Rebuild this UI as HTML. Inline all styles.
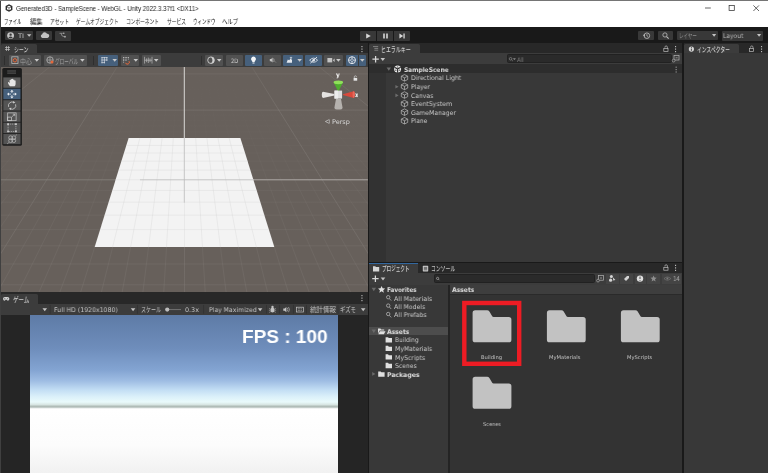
<!DOCTYPE html>
<html lang="ja"><head><meta charset="utf-8"><title>Generated3D - SampleScene - WebGL - Unity</title>
<style>
html,body{margin:0;padding:0;background:#191919;}
body{width:768px;height:473px;overflow:hidden;position:relative;font-family:"DejaVu Sans","Noto Sans CJK JP",sans-serif;}
.a{position:absolute;box-sizing:border-box;}
.t{will-change:transform;position:absolute;white-space:nowrap;line-height:2;transform-origin:0 50%;display:block;}
.b{position:absolute;background:#383838;border-radius:1px;}
.sb{position:absolute;background:#515151;border-radius:1px;top:55.2px;height:10.4px;}
.sb.on{background:#46607c;}
svg{position:absolute;overflow:visible;}
.tb{position:absolute;left:3.2px;width:17.3px;height:10.6px;background:#565656;border-radius:1px;}
</style></head>
<body>
<!-- ===== window chrome ===== -->
<div class="a" style="left:0;top:0;width:768px;height:26.7px;background:#fff"></div>
<div class="a" style="left:0;top:0;width:768px;height:1px;background:#757575"></div>
<!-- unity logo -->
<svg style="left:5.2px;top:3.9px" width="8" height="8" viewBox="0 0 16 16"><path d="M8 0.5 L14.8 4.2 V11.8 L8 15.5 L1.2 11.8 V4.2 Z" fill="#2b2b2b"/><path d="M8 3.4 L11.8 5.4 L8 7.4 L4.2 5.4 Z M4 6.6 L7.4 8.4 V12.4 L4 10.6 Z M12 6.6 L8.6 8.4 V12.4 L12 10.6 Z" fill="#fff"/></svg>
<!-- window buttons -->
<svg style="left:700px;top:2px" width="66" height="14" viewBox="0 0 66 14"><path d="M5 6 H10.8" stroke="#333" stroke-width=".75"/><rect x="29.1" y="3.4" width="5.2" height="5.2" fill="none" stroke="#333" stroke-width=".75"/><path d="M53.4 3.4 L59 9 M59 3.4 L53.4 9" stroke="#333" stroke-width=".75"/></svg>

<!-- ===== main toolbar ===== -->
<div class="a" style="left:0;top:26.7px;width:768px;height:17px;background:#191919"></div>
<div class="b" style="left:4.7px;top:30.5px;width:28.3px;height:9.8px"></div>
<div class="b" style="left:36.4px;top:30.5px;width:15.6px;height:9.8px"></div>
<div class="b" style="left:55.3px;top:30.5px;width:15.4px;height:10px"></div>
<svg style="left:7.4px;top:31.6px" width="7.2" height="7.2" viewBox="0 0 16 16"><circle cx="8" cy="8" r="7.6" fill="#c4c4c4"/><circle cx="8" cy="6" r="2.6" fill="#383838"/><path d="M3.2 12.6 Q8 7.4 12.8 12.6 Q8 16 3.2 12.6Z" fill="#383838"/></svg>
<svg style="left:27.2px;top:33.8px" width="4.4" height="3" viewBox="0 0 8 5"><path d="M0 0 H8 L4 5Z" fill="#c4c4c4"/></svg>
<svg style="left:39.6px;top:32.4px" width="9.6" height="6" viewBox="0 0 20 12"><path d="M5 12 A4 4 0 0 1 4.6 4.2 A5.2 5.2 0 0 1 14.6 3.6 A4.2 4.2 0 0 1 15.6 12 Z" fill="#c4c4c4"/></svg>
<svg style="left:59.4px;top:32.2px" width="7.6" height="6.4" viewBox="0 0 16 13"><path d="M1 2.5 H8 M4.5 2.5 Q5 9.5 10.5 9.5 H12" stroke="#b0b0b0" stroke-width="1.3" fill="none"/><circle cx="10" cy="2.5" r="1.7" fill="#b0b0b0"/><circle cx="12.6" cy="9.6" r="1.9" fill="#b0b0b0"/></svg>
<!-- play controls -->
<div class="b" style="left:359.7px;top:30.5px;width:16.2px;height:10px;border-radius:1px 0 0 1px"></div>
<div class="b" style="left:376.5px;top:30.5px;width:16.4px;height:10px;border-radius:0"></div>
<div class="b" style="left:393.5px;top:30.5px;width:16.2px;height:10px;border-radius:0 1px 1px 0"></div>
<svg style="left:359.7px;top:30.5px" width="50" height="10" viewBox="0 0 50 10"><path d="M6.2 2.4 L10.8 5 L6.2 7.6Z" fill="#d8d8d8"/><path d="M23.2 2.5 h1.6 v5 h-1.6z M26.2 2.5 h1.6 v5 h-1.6z" fill="#d8d8d8"/><path d="M39.4 2.5 L43.2 5 L39.4 7.5Z M43.4 2.5 h1.3 v5 h-1.3z" fill="#d8d8d8"/></svg>
<!-- right buttons -->
<div class="b" style="left:638.1px;top:30.5px;width:16.1px;height:9.8px"></div>
<div class="b" style="left:657.7px;top:30.5px;width:15.6px;height:9.8px"></div>
<div class="b" style="left:676.9px;top:30.5px;width:41.2px;height:9.8px"></div>
<div class="b" style="left:721.7px;top:30.5px;width:41.3px;height:10px"></div>
<svg style="left:642.6px;top:31.6px" width="7.4" height="7.4" viewBox="0 0 16 16"><circle cx="8.4" cy="8" r="6" fill="none" stroke="#c0c0c0" stroke-width="1.8"/><path d="M8.4 4.6 V8.4 L11 9.8" stroke="#c0c0c0" stroke-width="1.5" fill="none"/><path d="M0 6 L5 6 L2.4 9.6Z" fill="#c0c0c0"/></svg>
<svg style="left:661.6px;top:31.8px" width="7.4" height="7.4" viewBox="0 0 16 16"><circle cx="6.4" cy="6.4" r="4.6" fill="none" stroke="#c0c0c0" stroke-width="1.7"/><path d="M9.8 9.8 L14.4 14.4" stroke="#c0c0c0" stroke-width="2.2"/></svg>
<svg style="left:712.4px;top:33.9px" width="4.2" height="2.8" viewBox="0 0 8 5"><path d="M0 0 H8 L4 5Z" fill="#c4c4c4"/></svg>
<svg style="left:757.3px;top:33.9px" width="4.2" height="2.8" viewBox="0 0 8 5"><path d="M0 0 H8 L4 5Z" fill="#c4c4c4"/></svg>

<!-- ===== SCENE panel ===== -->
<div class="a" style="left:1px;top:43.3px;width:367px;height:10px;background:#282828"></div>
<div class="a" style="left:1px;top:43.5px;width:36.2px;height:9.9px;background:#3c3c3c;border-radius:1.5px 1.5px 0 0"></div>
<svg style="left:4.6px;top:46.2px" width="5" height="5" viewBox="0 0 10 10"><path d="M3 0 V10 M7 0 V10 M0 3 H10 M0 7 H10" stroke="#c4c4c4" stroke-width="1.3"/></svg>
<svg style="left:360.6px;top:45.6px" width="2" height="6.4" viewBox="0 0 2 6.4"><rect x=".4" y="0" width="1.1" height="1.2" fill="#bdbdbd"/><rect x=".4" y="2.5" width="1.1" height="1.2" fill="#bdbdbd"/><rect x=".4" y="5" width="1.1" height="1.2" fill="#bdbdbd"/></svg>
<div class="a" style="left:1px;top:53.3px;width:367px;height:14.1px;background:#3c3c3c"></div>
<!-- scene toolbar buttons -->
<div class="a" style="left:4px;top:56px;width:1px;height:8.6px;background:#2e2e2e"></div>
<div class="sb" style="left:9.3px;width:32.1px"></div>
<div class="sb" style="left:44px;width:43px"></div>
<div class="a" style="left:93.2px;top:56px;width:1px;height:8.6px;background:#2e2e2e"></div>
<div class="sb on" style="left:98.2px;width:12.7px;border-radius:1px 0 0 1px"></div>
<div class="sb on" style="left:111.3px;width:6.8px;border-radius:0 1px 1px 0"></div>
<div class="sb" style="left:120.5px;width:11.4px;border-radius:1px 0 0 1px"></div>
<div class="sb" style="left:132.4px;width:6.9px;border-radius:0 1px 1px 0"></div>
<div class="sb" style="left:141.8px;width:18.8px"></div>
<div class="a" style="left:201.2px;top:56px;width:1px;height:8.6px;background:#2e2e2e"></div>
<div class="sb" style="left:205.3px;width:17.5px"></div>
<div class="sb" style="left:226.3px;width:17px"></div>
<div class="sb on" style="left:245px;width:17px"></div>
<div class="sb" style="left:264px;width:16.8px"></div>
<div class="sb on" style="left:283.3px;width:12.6px;border-radius:1px 0 0 1px"></div>
<div class="sb on" style="left:296.3px;width:6.6px;border-radius:0 1px 1px 0"></div>
<div class="sb on" style="left:305.3px;width:16.7px"></div>
<div class="sb" style="left:324px;width:18.8px"></div>
<div class="sb on" style="left:345.8px;width:12.6px;border-radius:1px 0 0 1px"></div>
<div class="sb on" style="left:358.8px;width:7px;border-radius:0 1px 1px 0"></div>
<!-- scene toolbar icons -->
<svg style="left:0;top:53.3px" width="368" height="14" viewBox="0 0 368 14">
 <g fill="#c9c9c9">
  <path d="M34.5 5.9 h4.6 l-2.3 2.9z M80.1 5.9 h4.6 l-2.3 2.9z M112.4 5.9 h4.6 l-2.3 2.9z M133.5 5.9 h4.6 l-2.3 2.9z M153.9 5.9 h4.6 l-2.3 2.9z M216.9 5.9 h4.6 l-2.3 2.9z M297.3 5.9 h4.6 l-2.3 2.9z M336.1 5.9 h4.6 l-2.3 2.9z M360.0 5.9 h4.6 l-2.3 2.9z"/>
 </g>
 <!-- pivot icon -->
 <rect x="11.8" y="3.8" width="6.2" height="6.6" fill="none" stroke="#b8b8b8" stroke-width=".8"/><circle cx="14.9" cy="7.3" r="1.7" fill="none" stroke="#e8683a" stroke-width="1"/>
 <!-- globe -->
 <circle cx="50" cy="7" r="3.2" fill="none" stroke="#b8b8b8" stroke-width=".8"/><path d="M46.8 7 H53.2 M50 3.8 V10.2" stroke="#b8b8b8" stroke-width=".6"/><circle cx="52" cy="9" r="1.5" fill="#e8683a"/>
 <!-- grid snap -->
 <path d="M102 4 V10.4 M104.4 4 V10.4 M106.8 4 V8 M101.4 4.6 H107.6 M101.4 7 H107.6 M101.4 9.6 H105" stroke="#d8dde4" stroke-width=".7" fill="none"/>
 <!-- snap incr -->
 <path d="M123.6 4 V10.4 M126 4 V8 M128.4 4 V6.8 M123 4.6 H129 M123 7 H126.6" stroke="#c4c4c4" stroke-width=".7" fill="none" stroke-dasharray="1 .6"/><path d="M125.6 9.8 A1.9 1.9 0 1 0 129 8.2" stroke="#e8683a" stroke-width="1" fill="none"/>
 <!-- ruler -->
 <path d="M144.6 3.8 V10.6 M152 3.8 V10.6 M146.6 5.4 V9.2 M148.3 4.6 V10 M150 5.4 V9.2 M144.6 7.2 H152" stroke="#bcbcbc" stroke-width=".7" fill="none"/>
 <!-- shading sphere -->
 <circle cx="211" cy="7.2" r="3.3" fill="none" stroke="#cfcfcf" stroke-width=".9"/><path d="M211 3.9 A3.3 3.3 0 0 1 211 10.5 A5 5 0 0 0 211 3.9Z" fill="#cfcfcf"/>
 <!-- light bulb -->
 <path d="M253.5 3.6 a2.4 2.4 0 0 1 1.3 4.4 v1 h-2.6 v-1 a2.4 2.4 0 0 1 1.3 -4.4z M252.5 9.6 h2 v1 h-2z" fill="#f4f6f8"/>
 <!-- audio -->
 <path d="M269.8 6 h1.3 l1.5 -1.4 v5 l-1.5 -1.4 h-1.3z" fill="#c4c4c4"/><path d="M273.6 5.4 q1 1.7 0 3.4 M274.8 8.4 l1 1" stroke="#c4c4c4" stroke-width=".6" fill="none"/>
 <!-- fx -->
 <path d="M286.6 9.8 h5.4 v-3 l-1.6 -1 l-1.2 1.4 l-1.4 -.6z" fill="#e4e8ee"/><path d="M291 3.4 l.5 1 l1 .4 l-1 .4 l-.5 1 l-.5 -1 l-1 -.4 l1 -.4z" fill="#e4e8ee"/>
 <!-- hidden eye -->
 <path d="M309.6 7.2 q4 -4.2 8 0 q-4 4.2 -8 0z" fill="none" stroke="#e4e8ee" stroke-width=".8"/><circle cx="313.6" cy="7.2" r="1.2" fill="#e4e8ee"/><path d="M310.4 10.2 L317 4" stroke="#e4e8ee" stroke-width=".9"/>
 <!-- camera -->
 <rect x="327.4" y="5" width="4.8" height="4.4" fill="#c4c4c4"/><path d="M332.8 7.2 l1.8 -1.8 v3.6z" fill="#c4c4c4"/>
 <!-- gizmo sphere -->
 <circle cx="352" cy="7.2" r="3.5" fill="none" stroke="#e4e8ee" stroke-width="1"/><path d="M348.5 7.2 H355.5 M352 3.7 V10.7" stroke="#e4e8ee" stroke-width=".8"/><circle cx="352" cy="7.2" r="1.3" fill="#46607c" stroke="#e4e8ee" stroke-width=".6"/>
</svg>
<!-- scene view -->
<svg style="left:1px;top:67.3px;background:#67605b;overflow:hidden" width="366.9" height="224.9" viewBox="0 0 366.9 224.9">
<defs><linearGradient id="gmin" gradientUnits="userSpaceOnUse" x1="0" y1="0" x2="0" y2="224.2"><stop offset="0" stop-color="#8a8581" stop-opacity="0"/><stop offset=".3" stop-color="#8a8581" stop-opacity=".05"/><stop offset=".55" stop-color="#8a8581" stop-opacity=".18"/><stop offset="1" stop-color="#8a8581" stop-opacity=".34"/></linearGradient><linearGradient id="gmaj" gradientUnits="userSpaceOnUse" x1="0" y1="0" x2="0" y2="224.2"><stop offset="0" stop-color="#9a9591" stop-opacity=".16"/><stop offset=".2" stop-color="#9a9591" stop-opacity=".27"/><stop offset=".5" stop-color="#8e8985" stop-opacity=".36"/><stop offset="1" stop-color="#8a8581" stop-opacity=".34"/></linearGradient></defs>
<path d="M-1.9,-2.0 L-405.2,229.2 M4.7,-2.0 L-384.2,229.2 M11.3,-2.0 L-363.2,229.2 M17.9,-2.0 L-342.2,229.2 M24.6,-2.0 L-321.1,229.2 M31.2,-2.0 L-300.1,229.2 M37.8,-2.0 L-279.1,229.2 M44.4,-2.0 L-258.1,229.2 M57.7,-2.0 L-216.0,229.2 M64.3,-2.0 L-195.0,229.2 M70.9,-2.0 L-173.9,229.2 M77.5,-2.0 L-152.9,229.2 M84.2,-2.0 L-131.9,229.2 M90.8,-2.0 L-110.9,229.2 M97.4,-2.0 L-89.8,229.2 M104.0,-2.0 L-68.8,229.2 M110.7,-2.0 L-47.8,229.2 M123.9,-2.0 L-5.7,229.2 M130.5,-2.0 L15.3,229.2 M137.1,-2.0 L36.3,229.2 M143.8,-2.0 L57.3,229.2 M150.4,-2.0 L78.4,229.2 M157.0,-2.0 L99.4,229.2 M163.6,-2.0 L120.4,229.2 M170.3,-2.0 L141.4,229.2 M176.9,-2.0 L162.5,229.2 M190.1,-2.0 L204.5,229.2 M196.7,-2.0 L225.6,229.2 M203.4,-2.0 L246.6,229.2 M210.0,-2.0 L267.6,229.2 M216.6,-2.0 L288.6,229.2 M223.2,-2.0 L309.7,229.2 M229.9,-2.0 L330.7,229.2 M236.5,-2.0 L351.7,229.2 M243.1,-2.0 L372.7,229.2 M256.3,-2.0 L414.8,229.2 M263.0,-2.0 L435.8,229.2 M269.6,-2.0 L456.8,229.2 M276.2,-2.0 L477.9,229.2 M282.8,-2.0 L498.9,229.2 M289.5,-2.0 L519.9,229.2 M296.1,-2.0 L540.9,229.2 M302.7,-2.0 L562.0,229.2 M309.3,-2.0 L583.0,229.2 M322.6,-2.0 L625.1,229.2 M329.2,-2.0 L646.1,229.2 M335.8,-2.0 L667.1,229.2 M342.4,-2.0 L688.1,229.2 M349.1,-2.0 L709.2,229.2 M355.7,-2.0 L730.2,229.2 M362.3,-2.0 L751.2,229.2 M368.9,-2.0 L772.2,229.2 M-2.0,217.8 L368.9,217.8 M-2.0,197.0 L368.9,197.0 M-2.0,178.8 L368.9,178.8 M-2.0,162.6 L368.9,162.6 M-2.0,148.2 L368.9,148.2 M-2.0,135.2 L368.9,135.2 M-2.0,123.4 L368.9,123.4 M-2.0,103.1 L368.9,103.1 M-2.0,94.2 L368.9,94.2 M-2.0,86.0 L368.9,86.0 M-2.0,78.4 L368.9,78.4 M-2.0,71.5 L368.9,71.5 M-2.0,65.0 L368.9,65.0 M-2.0,59.0 L368.9,59.0 M-2.0,53.3 L368.9,53.3 M-2.0,48.1 L368.9,48.1 M-2.0,38.5 L368.9,38.5 M-2.0,34.2 L368.9,34.2 M-2.0,30.1 L368.9,30.1 M-2.0,26.2 L368.9,26.2 M-2.0,22.5 L368.9,22.5 M-2.0,19.1 L368.9,19.1 M-2.0,15.8 L368.9,15.8 M-2.0,12.7 L368.9,12.7 M-2.0,9.7 L368.9,9.7 M-2.0,4.2 L368.9,4.2 M-2.0,1.6 L368.9,1.6 M-2.0,-0.9 L368.9,-0.9" stroke="url(#gmin)" stroke-width=".7" fill="none"/>
<path d="M51.1,-2.0 L-237.0,229.2 M117.3,-2.0 L-26.8,229.2 M183.5,-2.0 L183.5,229.2 M249.7,-2.0 L393.8,229.2 M315.9,-2.0 L604.0,229.2 M-2.0,112.8 L368.9,112.8 M-2.0,43.1 L368.9,43.1 M-2.0,6.9 L368.9,6.9" stroke="url(#gmaj)" stroke-width=".9" fill="none"/>
<path d="M183.3,0.0 L183.3,71.1" stroke="#d8d6d4" stroke-width="1" fill="none"/>
<path d="M252.0,112.8 L366.9,112.8" stroke="#aeaaa7" stroke-width=".9" fill="none"/>
<path d="M0.0,112.8 L115.0,112.8" stroke="#8a8581" stroke-opacity=".5" stroke-width=".9" fill="none"/>
<polygon points="127.6,71.1 239.4,71.1 273.3,180.1 93.7,180.1" fill="#f3f3f3"/>
<path d="M138.8,71.1 L111.6,180.1 M150.0,71.1 L129.6,180.1 M161.1,71.1 L147.6,180.1 M172.3,71.1 L165.5,180.1 M183.5,71.1 L183.5,180.1 M194.7,71.1 L201.5,180.1 M205.9,71.1 L219.4,180.1 M217.0,71.1 L237.4,180.1 M228.2,71.1 L255.4,180.1 M99.1,162.6 L267.9,162.6 M103.6,148.2 L263.4,148.2 M107.7,135.2 L259.3,135.2 M111.3,123.4 L255.7,123.4 M114.6,112.8 L252.4,112.8 M117.7,103.1 L249.3,103.1 M120.4,94.2 L246.6,94.2 M123.0,86.0 L244.0,86.0 M125.3,78.4 L241.7,78.4" stroke="#d4d4d4" stroke-opacity=".6" stroke-width=".6" fill="none"/>
<path d="M183.3,71.1 L183.3,135.7 M139.0,112.8 L252.0,112.8" stroke="#b8b8b8" stroke-width=".7" fill="none"/>
 <g transform="translate(-1,-67.3)">
  <!-- gizmo -->
  <path d="M336 99.4 h5 l1.6 8.6 a4.1 1.9 0 0 1 -8.2 0z" fill="#d4d1ce" opacity=".72"/>
  <path d="M323 92 L334.4 94.4 V95.8 L323 98.2 A1.2 3.1 0 0 1 323 92Z" fill="#e4e2e0"/>
  <path d="M353.6 91.6 L343 94.6 V95.4 L353.6 98.2 A1.3 3.3 0 0 0 353.6 91.6Z" fill="#d9493c"/>
  <ellipse cx="353.7" cy="94.9" rx="1.1" ry="3.3" fill="#e76a5c"/>
  <path d="M333.6 82.6 L337.9 91.4 H338.7 L343.1 82.6Z" fill="#4fae2f"/>
  <ellipse cx="338.35" cy="82.6" rx="4.75" ry="1.9" fill="#8fe05a"/>
  <rect x="334.5" y="90.9" width="7.6" height="8" fill="#dfdfdf"/>
  <rect x="334.5" y="90.9" width="3.6" height="8" fill="#ececec"/>
  <!-- lock -->
  <rect x="353.6" y="78.2" width="3.6" height="2.8" fill="#e4e4e4"/><path d="M354.3 78.2 v-1 a1.1 1.1 0 0 1 2.2 0" stroke="#e4e4e4" stroke-width=".6" fill="none"/>
  <!-- persp icon -->
  <path d="M329.4 119.8 L325.4 121.8 L329.4 123.8" stroke="#d0d0d0" stroke-width=".7" fill="none"/><path d="M329.4 120.2 V123.4" stroke="#d0d0d0" stroke-width=".6"/>
  <!-- tools overlay -->
  <rect x="2.3" y="68.2" width="19.6" height="77.9" rx="1.6" fill="#1c1c1c"/>
  <path d="M7.2 71.3 H16 M7.2 73.4 H16" stroke="#757575" stroke-width=".7"/>
  <rect x="3.3" y="77.7" width="17.2" height="10.4" fill="#5c5c5c"/>
  <rect x="3.3" y="89" width="17.2" height="10.6" fill="#46607c"/>
  <rect x="3.3" y="100.5" width="17.2" height="10.4" fill="#545454"/>
  <rect x="3.3" y="111.8" width="17.2" height="10.3" fill="#545454"/>
  <rect x="3.3" y="122.9" width="17.2" height="10.4" fill="#545454"/>
  <rect x="3.3" y="134.1" width="17.2" height="10.4" fill="#545454"/>
  <!-- hand -->
  <path d="M10 86.6 Q8.6 85 8 83.2 Q7.8 82.4 8.6 82.4 L9.6 83.6 V80.6 Q9.6 80 10.2 80 Q10.8 80 10.8 80.6 V79.8 Q10.8 79.2 11.4 79.2 Q12 79.2 12 79.8 V79.6 Q12 79 12.6 79 Q13.2 79 13.2 79.6 V80.2 Q13.2 79.8 13.8 79.8 Q14.4 79.8 14.4 80.4 V81 Q14.4 80.6 15 80.6 Q15.6 80.6 15.6 81.2 V84.2 Q15.6 85.6 14.6 86.6Z" fill="#e6e6e6"/>
  <!-- move -->
  <path d="M11.9 90 l1.7 2 h-3.4z M11.9 98.8 l1.7 -2 h-3.4z M7 94.4 l2 -1.7 v3.4z M16.8 94.4 l-2 -1.7 v3.4z" fill="#eef1f5"/><path d="M11.9 92 V93.4 M11.9 95.4 V96.8 M9 94.4 H10.9 M12.9 94.4 H14.8" stroke="#eef1f5" stroke-width=".8"/>
  <!-- rotate -->
  <path d="M8.6 107.2 a3.7 3.7 0 0 1 5.4 -4.4 M15.6 104.6 a3.7 3.7 0 0 1 -5.4 4.4" stroke="#cdcdcd" stroke-width=".8" fill="none"/><path d="M13.2 101.4 l2.2 1.4 l-2.4 1.1z M11 110.4 l-2.2 -1.4 l2.4 -1.1z" fill="#cdcdcd"/>
  <!-- scale -->
  <rect x="7.7" y="113.2" width="8.4" height="7.8" fill="none" stroke="#cdcdcd" stroke-width=".7"/><rect x="7.7" y="117.4" width="3.8" height="3.6" fill="none" stroke="#cdcdcd" stroke-width=".7"/><path d="M12 117 L14.6 114.6 M12.8 114.5 h1.9 v1.9" stroke="#cdcdcd" stroke-width=".7" fill="none"/>
  <!-- rect -->
  <rect x="8.1" y="124.4" width="7.8" height="7.4" fill="none" stroke="#cdcdcd" stroke-width=".6" stroke-dasharray="1.2 .7"/><path d="M7.2 123.6 h1.7 v1.7 h-1.7z M15.1 123.6 h1.7 v1.7 h-1.7z M7.2 130.9 h1.7 v1.7 h-1.7z M15.1 130.9 h1.7 v1.7 h-1.7z" fill="#cdcdcd"/>
  <!-- transform -->
  <circle cx="10.6" cy="138" r="1.9" fill="none" stroke="#cdcdcd" stroke-width=".6"/><circle cx="13.8" cy="138" r="1.9" fill="none" stroke="#cdcdcd" stroke-width=".6"/><circle cx="10.6" cy="141" r="1.9" fill="none" stroke="#cdcdcd" stroke-width=".6"/><circle cx="13.8" cy="141" r="1.9" fill="none" stroke="#cdcdcd" stroke-width=".6"/><path d="M8.8 142.8 l-1.6 1.4 M15.4 136.2 l1.4 -1.2" stroke="#cdcdcd" stroke-width=".6"/>
 </g>
</svg>

<!-- ===== GAME panel ===== -->
<div class="a" style="left:1px;top:292.2px;width:367px;height:11.5px;background:#282828"></div>
<div class="a" style="left:1px;top:293.7px;width:36.6px;height:10.1px;background:#3c3c3c;border-radius:1.5px 1.5px 0 0"></div>
<svg style="left:3.4px;top:297.2px" width="6.4" height="4" viewBox="0 0 16 10"><path d="M4.6 0 H11.4 A4.6 4.6 0 0 1 11.4 9.2 L9.6 7 H6.4 L4.6 9.2 A4.6 4.6 0 0 1 4.6 0Z" fill="#d0d0d0"/><circle cx="4.6" cy="4.4" r="1.4" fill="#3c3c3c"/><circle cx="11.4" cy="4.4" r="1.2" fill="#3c3c3c"/></svg>
<svg style="left:360.6px;top:295.2px" width="2" height="6.4" viewBox="0 0 2 6.4"><rect x=".4" y="0" width="1.1" height="1.2" fill="#bdbdbd"/><rect x=".4" y="2.5" width="1.1" height="1.2" fill="#bdbdbd"/><rect x=".4" y="5" width="1.1" height="1.2" fill="#bdbdbd"/></svg>
<div class="a" style="left:1px;top:303.7px;width:367px;height:11px;background:#3c3c3c"></div>
<div class="a" style="left:1px;top:314.7px;width:367px;height:158.3px;background:#252525"></div>
<!-- game toolbar bits -->
<svg style="left:0;top:303.7px" width="368" height="10.7" viewBox="0 0 368 10.7">
 <path d="M42.3 4.3 h4.6 l-2.3 2.9z M130.7 4.3 h4.6 l-2.3 2.9z M257.9 4.3 h4.6 l-2.3 2.9z M361.1 4.3 h4.6 l-2.3 2.9z" fill="#c4c4c4"/>
 <path d="M50 1 V9.7 M137.4 1 V9.7 M203.6 1 V9.7 M266.6 1 V9.7 M279.6 1 V9.7 M293.6 1 V9.7 M306.6 1 V9.7 M338.2 1 V9.7" stroke="#303030" stroke-width=".7"/>
 <path d="M167 5.6 H181" stroke="#8a8a8a" stroke-width=".7"/><circle cx="167.2" cy="5.6" r="2.1" fill="#bdbdbd"/>
 <!-- bug -->
 <ellipse cx="272.6" cy="6" rx="2" ry="2.6" fill="#c4c4c4"/><circle cx="272.6" cy="3" r="1.2" fill="#c4c4c4"/><path d="M269.4 4.4 l1.4 .8 M275.8 4.4 l-1.4 .8 M269 6.2 h1.6 M276.2 6.2 h-1.6 M269.4 8.4 l1.4 -.8 M275.8 8.4 l-1.4 -.8" stroke="#c4c4c4" stroke-width=".6"/>
 <!-- audio -->
 <path d="M283.4 4.4 h1.4 l1.7 -1.5 v5.4 l-1.7 -1.5 h-1.4z" fill="#c4c4c4"/><path d="M287.4 3.8 q1.2 1.8 0 3.6 M288.6 3 q2 2.6 0 5.2" stroke="#c4c4c4" stroke-width=".6" fill="none"/>
 <!-- keyboard -->
 <rect x="296.6" y="3.2" width="7" height="4.8" fill="none" stroke="#c4c4c4" stroke-width=".7"/><path d="M298 4.8 h4.2 M298 6.4 h4.2" stroke="#c4c4c4" stroke-width=".7" stroke-dasharray=".9 .6"/>
</svg>
<!-- game image -->
<div class="a" style="left:30px;top:314.7px;width:308.3px;height:158.3px;background:linear-gradient(to bottom,#5e7ba6 0,#6e8dbb 33px,#83a4d2 55px,#9fbde3 66px,#c3def4 75px,#dcf1fa 82px,#e9fafb 87px,#d8e6e3 89.6px,#aebbb6 91.4px,#c6cfcc 92.6px,#ffffff 93.8px,#fcfcfc 130px,#f1f1f1 158px)"></div>

<!-- ===== HIERARCHY ===== -->
<div class="a" style="left:369.2px;top:43.3px;width:313.2px;height:10px;background:#282828"></div>
<div class="a" style="left:369.2px;top:43.5px;width:50.6px;height:9.9px;background:#3c3c3c;border-radius:1.5px 1.5px 0 0"></div>
<svg style="left:373.2px;top:46.4px" width="5.2" height="4.8" viewBox="0 0 10 9"><path d="M0 1 H10 M2.6 4.5 H10 M2.6 8 H10" stroke="#9a9a9a" stroke-width="1.4"/></svg>
<div class="a" style="left:369.2px;top:53.3px;width:313.2px;height:11px;background:#3c3c3c"></div>
<div class="a" style="left:369.2px;top:64.2px;width:313.2px;height:197.8px;background:#383838"></div>
<div class="a" style="left:369.2px;top:64.2px;width:17px;height:197.8px;background:#323232"></div>
<div class="a" style="left:369.2px;top:64.2px;width:313.2px;height:8.8px;background:#2d2d2d"></div>
<!-- search field -->
<div class="a" style="left:507.1px;top:53.9px;width:164.6px;height:9.6px;background:#2a2a2a;border:.6px solid #212121;border-radius:1.5px"></div>
<svg style="left:369.2px;top:43.6px" width="314" height="80" viewBox="0 0 314 80">
 <!-- lock + kebab -->
 <g id="lk"><rect x="294.8" y="4.6" width="4.2" height="2.8" fill="none" stroke="#bdbdbd" stroke-width=".7"/><path d="M298.4 4.6 v-1.4 a1.25 1.25 0 0 0 -2.5 0 v.5" stroke="#bdbdbd" stroke-width=".7" fill="none"/></g>
 <g id="kb" fill="#bdbdbd"><rect x="306" y="2" width="1.1" height="1.2"/><rect x="306" y="4.5" width="1.1" height="1.2"/><rect x="306" y="7" width="1.1" height="1.2"/></g>
 <g fill="#9a9a9a"><rect x="306.6" y="22.6" width="1.1" height="1.2"/><rect x="306.6" y="25" width="1.1" height="1.2"/><rect x="306.6" y="27.4" width="1.1" height="1.2"/></g>
 <!-- plus -->
 <path d="M3.4 15.2 H9.8 M6.6 12 V18.4" stroke="#d8d8d8" stroke-width="1.25"/><path d="M11.5 14.1 h4.6 l-2.3 2.9z" fill="#c4c4c4"/>
 <!-- search icon -->
 <circle cx="141.6" cy="14.8" r="1.3" fill="none" stroke="#8a8a8a" stroke-width=".7"/><path d="M142.6 15.8 l1.4 1.4 M144.4 14.6 h2 l-1 1.2z" stroke="#8a8a8a" stroke-width=".6" fill="#8a8a8a"/>
 <!-- search by type icon -->
 <rect x="305" y="11.4" width="5" height="4.6" fill="none" stroke="#b4b4b4" stroke-width=".7"/><circle cx="304.6" cy="16.6" r="1.4" fill="#3c3c3c" stroke="#b4b4b4" stroke-width=".6"/><path d="M306.6 13.8 h2" stroke="#b4b4b4" stroke-width=".7"/>
 <!-- scene row -->
 <path d="M17.6 23.4 h4.4 l-2.2 3.4z" fill="#6e6e6e"/>
 <g transform="translate(25.2,21.5)"><circle cx="3.4" cy="3.6" r="3.5" fill="#ececec"/><path d="M3.4 3.6 V7.2 M3.4 3.6 L.3 1.8 M3.4 3.6 L6.5 1.8" stroke="#2d2d2d" stroke-width="1.1"/><path d="M3.4 .2 L4.6 2.2 H2.2Z M.4 5.4 L1.6 3.6 L2.6 5.6Z M6.4 5.4 L5.2 3.6 L4.2 5.6Z" fill="#2d2d2d" opacity=".55"/></g>
 <!-- arrows -->
 <path d="M26.4 41 l3.2 1.8 l-3.2 1.8z M26.4 49.6 l3.2 1.8 l-3.2 1.8z" fill="#6e6e6e"/>
 <!-- cubes -->
 <g id="cube" fill="none" stroke="#c8c8c8" stroke-width=".65"><path d="M35.5 30.6 L38.7 32.2 V35.5 L35.5 37.1 L32.3 35.5 V32.2Z M32.3 32.2 L35.5 33.8 L38.7 32.2 M35.5 33.8 V37.1"/></g>
 <use href="#cube" y="8.58"/><use href="#cube" y="17.16"/><use href="#cube" y="25.74"/><use href="#cube" y="34.32"/><use href="#cube" y="42.9"/>
</svg>

<!-- ===== INSPECTOR ===== -->
<div class="a" style="left:684.1px;top:43.3px;width:83.9px;height:10px;background:#282828"></div>
<div class="a" style="left:684.1px;top:43.5px;width:54.9px;height:9.9px;background:#3c3c3c;border-radius:1.5px 1.5px 0 0"></div>
<div class="a" style="left:684.1px;top:53.3px;width:83.9px;height:419.7px;background:#383838"></div>
<svg style="left:684.5px;top:43.6px" width="84" height="10" viewBox="0 0 84 10">
 <circle cx="6.4" cy="5.1" r="2.6" fill="#d4d4d4"/><path d="M6.4 4.6 V6.8" stroke="#3c3c3c" stroke-width=".9"/><circle cx="6.4" cy="3.6" r=".5" fill="#3c3c3c"/>
 <rect x="64.4" y="4.6" width="4.2" height="2.8" fill="none" stroke="#bdbdbd" stroke-width=".7"/><path d="M68.0 4.6 v-1.4 a1.25 1.25 0 0 0 -2.5 0 v.5" stroke="#bdbdbd" stroke-width=".7" fill="none"/>
 <g fill="#bdbdbd"><rect x="76" y="2" width="1.1" height="1.2"/><rect x="76" y="4.5" width="1.1" height="1.2"/><rect x="76" y="7" width="1.1" height="1.2"/></g>
</svg>

<!-- ===== PROJECT ===== -->
<div class="a" style="left:369.2px;top:263px;width:313.2px;height:9.7px;background:#282828"></div>
<div class="a" style="left:369.2px;top:263px;width:48.7px;height:9.8px;background:#3c3c3c;border-top:.9px solid #33689f"></div>
<div class="a" style="left:369.2px;top:272.7px;width:313.2px;height:12.2px;background:#3c3c3c"></div>
<div class="a" style="left:369.2px;top:284.9px;width:79.2px;height:188.1px;background:#383838"></div>
<div class="a" style="left:448.4px;top:284.9px;width:1.2px;height:188.1px;background:#242424"></div>
<div class="a" style="left:449.6px;top:284.9px;width:232.8px;height:188.1px;background:#333333"></div>
<div class="a" style="left:449.6px;top:284.9px;width:232.8px;height:10.5px;background:#3e3e3e;border-bottom:.6px solid #2a2a2a"></div>
<div class="a" style="left:369.2px;top:326.9px;width:79.2px;height:8.4px;background:#4d4d4d"></div>
<!-- search -->
<div class="a" style="left:434.4px;top:274.4px;width:160.2px;height:8.4px;background:#2a2a2a;border:.6px solid #212121;border-radius:1.5px"></div>
<!-- toolbar buttons -->
<div class="a" style="left:606px;top:273.6px;width:12.8px;height:10.2px;background:#444"></div>
<div class="a" style="left:620.3px;top:273.6px;width:13px;height:10.2px;background:#444"></div>
<div class="a" style="left:634.5px;top:273.6px;width:11.4px;height:10.2px;background:#444"></div>
<div class="a" style="left:647px;top:273.6px;width:13px;height:10.2px;background:#444"></div>
<div class="a" style="left:661.7px;top:273.6px;width:19.4px;height:10.2px;background:#444"></div>
<svg style="left:369.2px;top:263px" width="314" height="120" viewBox="0 0 314 120">
 <!-- tab icons -->
 <path d="M4 3.2 h2.2 l.8 .9 h3.2 v4.4 h-6.2z" fill="#d6d6d6"/>
 <rect x="53.8" y="2.8" width="5.4" height="5.6" rx=".6" fill="#c8c8c8"/><path d="M54.8 4.4 h3.4 M54.8 5.6 h3.4 M54.8 6.8 h3.4" stroke="#282828" stroke-width=".6"/>
 <rect x="294.8" y="4.4" width="4.2" height="2.8" fill="none" stroke="#bdbdbd" stroke-width=".7"/><path d="M298.4 4.4 v-1.4 a1.25 1.25 0 0 0 -2.5 0 v.5" stroke="#bdbdbd" stroke-width=".7" fill="none"/>
 <g fill="#bdbdbd"><rect x="306" y="1.8" width="1.1" height="1.2"/><rect x="306" y="4.3" width="1.1" height="1.2"/><rect x="306" y="6.8" width="1.1" height="1.2"/></g>
 <!-- plus -->
 <path d="M3.2 15.7 H9.6 M6.4 12.5 V18.9" stroke="#d8d8d8" stroke-width="1.25"/><path d="M11.7 14.6 h4.6 l-2.3 2.9z" fill="#c4c4c4"/>
 <circle cx="68.6" cy="15.4" r="1.1" fill="none" stroke="#c0c0c0" stroke-width=".6"/><path d="M69.4 16.2 l1 1" stroke="#c0c0c0" stroke-width=".6"/>
 <!-- toolbar icons -->
 <rect x="229.4" y="12.6" width="5" height="4.6" fill="none" stroke="#b4b4b4" stroke-width=".7"/><circle cx="229" cy="17.6" r="1.4" fill="#3c3c3c" stroke="#b4b4b4" stroke-width=".6"/><path d="M231 15 h2" stroke="#b4b4b4" stroke-width=".7"/>
 <circle cx="242.4" cy="13.6" r="1.5" fill="#d4d4d4"/><circle cx="241.6" cy="17.2" r="1.6" fill="#d4d4d4"/><path d="M244 14.4 l2.4 2.6 l-2.2 .6z" fill="#d4d4d4"/>
 <path d="M255 16 l3 -3 h2 v2 l-3 3z" fill="#d4d4d4"/>
 <circle cx="271" cy="15.6" r="3.2" fill="#e0e0e0"/><path d="M271 13.6 V16" stroke="#444" stroke-width=".9"/><circle cx="271" cy="17.4" r=".5" fill="#444"/>
 <path d="M284.6 12.6 l.9 2 l2.2 .2 l-1.7 1.4 l.6 2.2 l-2 -1.2 l-2 1.2 l.6 -2.2 l-1.7 -1.4 l2.2 -.2z" fill="#8e8e8e"/>
 <path d="M295 15.6 q3.4 -3.2 6.8 0 q-3.4 3.2 -6.8 0z" fill="none" stroke="#7c7c7c" stroke-width=".6"/><circle cx="298.4" cy="15.6" r="1" fill="#7c7c7c"/>
 <!-- tree arrows -->
 <path d="M2.6 24.8 h4.4 l-2.2 3.4z M2.6 66.6 h4.4 l-2.2 3.4z" fill="#6a6a6a"/>
 <path d="M3.2 109 l3.2 1.9 l-3.2 1.9z" fill="#6a6a6a"/>
 <!-- star -->
 <path d="M12.6 23 l1.05 2.3 l2.5 .25 l-1.9 1.65 l.6 2.45 l-2.25 -1.3 l-2.25 1.3 l.6 -2.45 l-1.9 -1.65 l2.5 -.25z" fill="#e0e0e0"/>
 <!-- search icons -->
 <g id="mg" fill="none" stroke="#c0c0c0" stroke-width=".7"><circle cx="19.2" cy="34.2" r="1.7"/><path d="M20.4 35.6 l1.8 2"/></g>
 <use href="#mg" y="8.4"/><use href="#mg" y="16.8"/>
 <!-- folder open -->
 <path d="M9 65.6 h2.4 l.8 .9 h3 v1 h-4.6 l-1.6 3.2z" fill="#e0e0e0"/><path d="M10.9 68.2 h5.6 l-1.6 3 h-5.6z" fill="#e0e0e0"/>
 <!-- folders -->
 <g id="fo"><path d="M16.6 74.2 h2.4 l.8 .9 h3.2 v4.4 h-6.4z" fill="#e0e0e0"/></g>
 <use href="#fo" y="8.55"/><use href="#fo" y="17.1"/><use href="#fo" y="25.65"/><use href="#fo" x="-7.4" y="34.2"/>
</svg>
<!-- big folders -->
<svg style="left:449.6px;top:295.4px" width="233" height="178" viewBox="0 0 233 178">
 <defs><path id="bf" d="M2.6 0 H14.4 Q16 0 16.8 1.3 L19.6 6 Q20 6.6 21 6.6 H36.2 Q38.8 6.6 38.8 9.2 V29.4 Q38.8 32 36.2 32 H2.6 Q0 32 0 29.4 V2.6 Q0 0 2.6 0Z" fill="#c2c2c2"/></defs>
 <use href="#bf" x="22.6" y="15.3"/><use href="#bf" x="96.9" y="15.3"/><use href="#bf" x="170.9" y="15.3"/><use href="#bf" x="22.6" y="81.8"/>
 <rect x="14.3" y="8" width="54.9" height="60.8" fill="none" stroke="#ed1c24" stroke-width="4.4"/>
</svg>

<!-- window border -->
<div class="a" style="left:0;top:1px;width:.9px;height:472px;background:#404040"></div>
<span class="t" style='left:15.8px;top:1.7px;font-size:6.60px;color:#1a1a1a;font-family:"Liberation Sans","Noto Sans CJK JP",sans-serif;transform:scaleX(0.925);'>Generated3D - SampleScene - WebGL - Unity 2022.3.37f1 &lt;DX11&gt;</span>
<span class="t" style='left:4.4px;top:15.2px;font-size:6.60px;color:#1a1a1a;font-family:"Liberation Sans","Noto Sans CJK JP",sans-serif;transform:scaleX(0.660);'>ファイル</span>
<span class="t" style='left:30.0px;top:15.2px;font-size:6.60px;color:#1a1a1a;font-family:"Liberation Sans","Noto Sans CJK JP",sans-serif;transform:scaleX(0.948);'>編集</span>
<span class="t" style='left:50.0px;top:15.2px;font-size:6.60px;color:#1a1a1a;font-family:"Liberation Sans","Noto Sans CJK JP",sans-serif;transform:scaleX(0.724);'>アセット</span>
<span class="t" style='left:76.0px;top:15.2px;font-size:6.60px;color:#1a1a1a;font-family:"Liberation Sans","Noto Sans CJK JP",sans-serif;transform:scaleX(0.718);'>ゲームオブジェクト</span>
<span class="t" style='left:126.0px;top:15.2px;font-size:6.60px;color:#1a1a1a;font-family:"Liberation Sans","Noto Sans CJK JP",sans-serif;transform:scaleX(0.715);'>コンポーネント</span>
<span class="t" style='left:166.5px;top:15.2px;font-size:6.60px;color:#1a1a1a;font-family:"Liberation Sans","Noto Sans CJK JP",sans-serif;transform:scaleX(0.720);'>サービス</span>
<span class="t" style='left:192.5px;top:15.2px;font-size:6.60px;color:#1a1a1a;font-family:"Liberation Sans","Noto Sans CJK JP",sans-serif;transform:scaleX(0.682);'>ウィンドウ</span>
<span class="t" style='left:222.0px;top:15.2px;font-size:6.60px;color:#1a1a1a;font-family:"Liberation Sans","Noto Sans CJK JP",sans-serif;transform:scaleX(0.809);'>ヘルプ</span>
<span class="t" style='left:18.2px;top:30.0px;font-size:6.20px;color:#c4c4c4;font-family:"DejaVu Sans","Noto Sans CJK JP",sans-serif;transform:scaleX(1.087);'>TI</span>
<span class="t" style='left:678.8px;top:29.3px;font-size:7.00px;color:#8e8e8e;font-family:"DejaVu Sans","Noto Sans CJK JP",sans-serif;transform:scaleX(0.644);'>レイヤー</span>
<span class="t" style='left:723.2px;top:29.9px;font-size:6.40px;color:#b4b4b4;font-family:"DejaVu Sans","Noto Sans CJK JP",sans-serif;transform:scaleX(0.934);'>Layout</span>
<span class="t" style='left:13.5px;top:42.7px;font-size:7.00px;color:#d0d0d0;font-family:"DejaVu Sans","Noto Sans CJK JP",sans-serif;font-weight:500;transform:scaleX(0.697);'>シーン</span>
<span class="t" style='left:380.9px;top:42.7px;font-size:7.00px;color:#d0d0d0;font-family:"DejaVu Sans","Noto Sans CJK JP",sans-serif;font-weight:500;transform:scaleX(0.705);'>ヒエラルキー</span>
<span class="t" style='left:696.6px;top:42.7px;font-size:7.00px;color:#d0d0d0;font-family:"DejaVu Sans","Noto Sans CJK JP",sans-serif;font-weight:500;transform:scaleX(0.686);'>インスペクター</span>
<span class="t" style='left:12.5px;top:293.3px;font-size:7.00px;color:#d0d0d0;font-family:"DejaVu Sans","Noto Sans CJK JP",sans-serif;font-weight:500;transform:scaleX(0.784);'>ゲーム</span>
<span class="t" style='left:381.5px;top:262.3px;font-size:7.00px;color:#d0d0d0;font-family:"DejaVu Sans","Noto Sans CJK JP",sans-serif;font-weight:500;transform:scaleX(0.655);'>プロジェクト</span>
<span class="t" style='left:431.0px;top:262.3px;font-size:7.00px;color:#c0c0c0;font-family:"DejaVu Sans","Noto Sans CJK JP",sans-serif;font-weight:500;transform:scaleX(0.691);'>コンソール</span>
<span class="t" style='left:20.0px;top:54.5px;font-size:7.00px;color:#9e9e9e;font-family:"DejaVu Sans","Noto Sans CJK JP",sans-serif;transform:scaleX(0.843);'>中心</span>
<span class="t" style='left:55.0px;top:54.5px;font-size:7.00px;color:#9e9e9e;font-family:"DejaVu Sans","Noto Sans CJK JP",sans-serif;transform:scaleX(0.658);'>グローバル</span>
<span class="t" style='left:230.8px;top:55.3px;font-size:6.00px;color:#d2d2d2;font-family:"DejaVu Sans","Noto Sans CJK JP",sans-serif;transform:scaleX(0.877);'>2D</span>
<span class="t" style='left:331.5px;top:116.4px;font-size:6.40px;color:#d6d6d6;font-family:"DejaVu Sans","Noto Sans CJK JP",sans-serif;transform:scaleX(1.018);'>Persp</span>
<span class="t" style='left:336.0px;top:69.4px;font-size:6.20px;color:#ffffff;font-family:"DejaVu Sans","Noto Sans CJK JP",sans-serif;font-weight:700;transform:scaleX(0.890);'>y</span>
<span class="t" style='left:354.9px;top:88.7px;font-size:6.20px;color:#ffffff;font-family:"DejaVu Sans","Noto Sans CJK JP",sans-serif;font-weight:700;transform:scaleX(0.850);'>x</span>
<span class="t" style='left:53.8px;top:303.9px;font-size:6.40px;color:#c4c4c4;font-family:"DejaVu Sans","Noto Sans CJK JP",sans-serif;transform:scaleX(0.965);'>Full HD (1920x1080)</span>
<span class="t" style='left:140.8px;top:303.3px;font-size:7.00px;color:#c4c4c4;font-family:"DejaVu Sans","Noto Sans CJK JP",sans-serif;transform:scaleX(0.714);'>スケール</span>
<span class="t" style='left:184.5px;top:303.9px;font-size:6.40px;color:#c4c4c4;font-family:"DejaVu Sans","Noto Sans CJK JP",sans-serif;transform:scaleX(0.989);'>0.3x</span>
<span class="t" style='left:208.8px;top:303.9px;font-size:6.40px;color:#c4c4c4;font-family:"DejaVu Sans","Noto Sans CJK JP",sans-serif;transform:scaleX(0.960);'>Play Maximized</span>
<span class="t" style='left:309.5px;top:303.3px;font-size:7.00px;color:#c4c4c4;font-family:"DejaVu Sans","Noto Sans CJK JP",sans-serif;transform:scaleX(0.921);'>統計情報</span>
<span class="t" style='left:340.0px;top:303.3px;font-size:7.00px;color:#c4c4c4;font-family:"DejaVu Sans","Noto Sans CJK JP",sans-serif;transform:scaleX(0.752);'>ギズモ</span>
<span class="t" style='left:242.2px;top:317.8px;font-size:19.20px;color:#ffffff;font-family:"Liberation Sans",sans-serif;font-weight:700;transform:scaleX(0.991);'>FPS : 100</span>
<span class="t" style='left:517.3px;top:53.6px;font-size:6.20px;color:#7e7e7e;font-family:"DejaVu Sans","Noto Sans CJK JP",sans-serif;transform:scaleX(0.873);'>All</span>
<span class="t" style='left:403.7px;top:63.8px;font-size:6.40px;color:#dedede;font-family:"DejaVu Sans","Noto Sans CJK JP",sans-serif;font-weight:700;transform:scaleX(0.923);'>SampleScene</span>
<span class="t" style='left:410.6px;top:72.4px;font-size:6.40px;color:#c8c8c8;font-family:"DejaVu Sans","Noto Sans CJK JP",sans-serif;transform:scaleX(0.952);'>Directional Light</span>
<span class="t" style='left:410.6px;top:81.0px;font-size:6.40px;color:#c8c8c8;font-family:"DejaVu Sans","Noto Sans CJK JP",sans-serif;transform:scaleX(0.955);'>Player</span>
<span class="t" style='left:410.6px;top:89.6px;font-size:6.40px;color:#c8c8c8;font-family:"DejaVu Sans","Noto Sans CJK JP",sans-serif;transform:scaleX(0.946);'>Canvas</span>
<span class="t" style='left:410.6px;top:98.1px;font-size:6.40px;color:#c8c8c8;font-family:"DejaVu Sans","Noto Sans CJK JP",sans-serif;transform:scaleX(0.975);'>EventSystem</span>
<span class="t" style='left:410.6px;top:106.7px;font-size:6.40px;color:#c8c8c8;font-family:"DejaVu Sans","Noto Sans CJK JP",sans-serif;transform:scaleX(0.952);'>GameManager</span>
<span class="t" style='left:410.6px;top:115.3px;font-size:6.40px;color:#c8c8c8;font-family:"DejaVu Sans","Noto Sans CJK JP",sans-serif;transform:scaleX(0.935);'>Plane</span>
<span class="t" style='left:387.4px;top:283.8px;font-size:6.40px;color:#dedede;font-family:"DejaVu Sans","Noto Sans CJK JP",sans-serif;font-weight:700;transform:scaleX(0.886);'>Favorites</span>
<span class="t" style='left:394.2px;top:292.5px;font-size:6.40px;color:#c8c8c8;font-family:"DejaVu Sans","Noto Sans CJK JP",sans-serif;transform:scaleX(0.968);'>All Materials</span>
<span class="t" style='left:394.2px;top:300.9px;font-size:6.40px;color:#c8c8c8;font-family:"DejaVu Sans","Noto Sans CJK JP",sans-serif;transform:scaleX(0.957);'>All Models</span>
<span class="t" style='left:394.2px;top:309.3px;font-size:6.40px;color:#c8c8c8;font-family:"DejaVu Sans","Noto Sans CJK JP",sans-serif;transform:scaleX(0.974);'>All Prefabs</span>
<span class="t" style='left:387.4px;top:325.7px;font-size:6.40px;color:#dedede;font-family:"DejaVu Sans","Noto Sans CJK JP",sans-serif;font-weight:700;transform:scaleX(0.935);'>Assets</span>
<span class="t" style='left:394.7px;top:334.4px;font-size:6.40px;color:#c8c8c8;font-family:"DejaVu Sans","Noto Sans CJK JP",sans-serif;transform:scaleX(0.914);'>Building</span>
<span class="t" style='left:394.7px;top:343.0px;font-size:6.40px;color:#c8c8c8;font-family:"DejaVu Sans","Noto Sans CJK JP",sans-serif;transform:scaleX(0.961);'>MyMaterials</span>
<span class="t" style='left:394.7px;top:351.5px;font-size:6.40px;color:#c8c8c8;font-family:"DejaVu Sans","Noto Sans CJK JP",sans-serif;transform:scaleX(0.972);'>MyScripts</span>
<span class="t" style='left:394.7px;top:360.1px;font-size:6.40px;color:#c8c8c8;font-family:"DejaVu Sans","Noto Sans CJK JP",sans-serif;transform:scaleX(0.951);'>Scenes</span>
<span class="t" style='left:387.4px;top:368.5px;font-size:6.40px;color:#dedede;font-family:"DejaVu Sans","Noto Sans CJK JP",sans-serif;font-weight:700;transform:scaleX(0.962);'>Packages</span>
<span class="t" style='left:451.6px;top:283.8px;font-size:6.40px;color:#dedede;font-family:"DejaVu Sans","Noto Sans CJK JP",sans-serif;font-weight:700;transform:scaleX(0.935);'>Assets</span>
<span class="t" style='left:480.9px;top:352.4px;font-size:5.20px;color:#c4c4c4;font-family:"DejaVu Sans","Noto Sans CJK JP",sans-serif;transform:scaleX(0.998);'>Building</span>
<span class="t" style='left:549.3px;top:352.4px;font-size:5.20px;color:#c4c4c4;font-family:"DejaVu Sans","Noto Sans CJK JP",sans-serif;transform:scaleX(1.005);'>MyMaterials</span>
<span class="t" style='left:627.0px;top:352.4px;font-size:5.20px;color:#c4c4c4;font-family:"DejaVu Sans","Noto Sans CJK JP",sans-serif;transform:scaleX(0.988);'>MyScripts</span>
<span class="t" style='left:482.5px;top:419.3px;font-size:5.20px;color:#c4c4c4;font-family:"DejaVu Sans","Noto Sans CJK JP",sans-serif;transform:scaleX(0.971);'>Scenes</span>
<span class="t" style='left:673.0px;top:273.2px;font-size:6.40px;color:#ababab;font-family:"DejaVu Sans","Noto Sans CJK JP",sans-serif;transform:scaleX(0.823);'>14</span>

</body></html>
